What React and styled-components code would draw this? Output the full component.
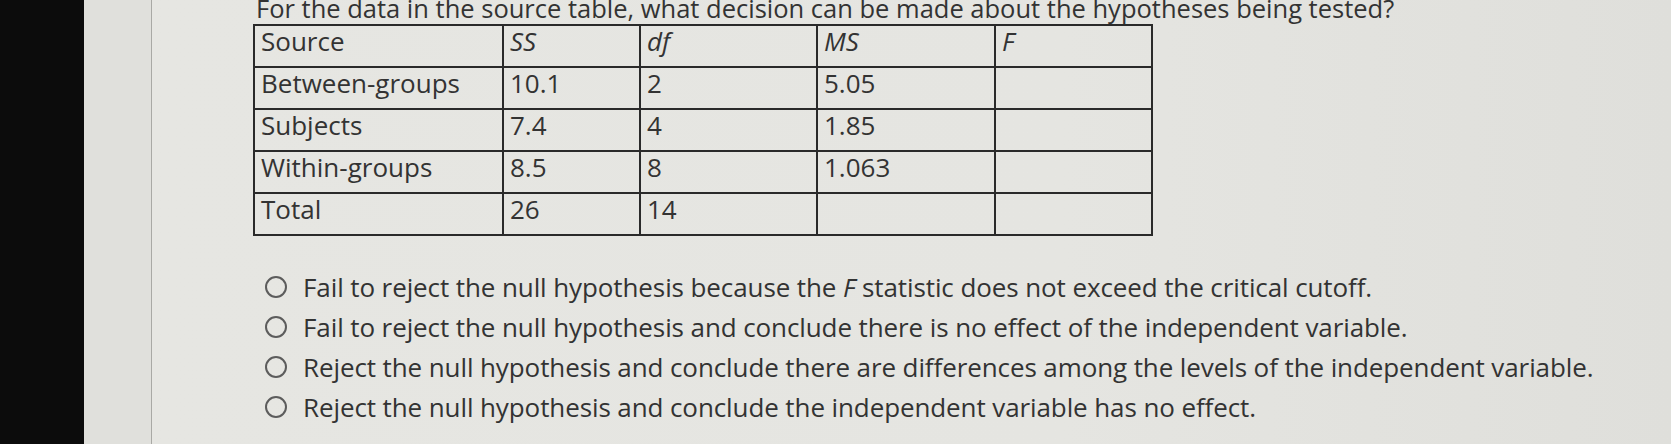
import React from 'react'
import styled, { createGlobalStyle } from 'styled-components'

const Global = createGlobalStyle`
  html, body {
    margin: 0;
    padding: 0;
    background: #e4e4e0;
  }
`

const rows = [
  ['Between-groups', '10.1', '2', '5.05', ''],
  ['Subjects', '7.4', '4', '1.85', ''],
  ['Within-groups', '8.5', '8', '1.063', ''],
  ['Total', '26', '14', '', ''],
]

const widths = [249, 137, 177, 178, 157]

function App() {
  return (
    <Page>
      <Global />
      <Bezel />
      <Gutter />
      <Main>
        <Question>
          For the data in the source table, what decision can be made about the hypotheses being tested?
        </Question>
        <Table>
          <colgroup>
            {widths.map((w, i) => (
              <col key={i} style={{ width: w }} />
            ))}
          </colgroup>
          <tbody>
            <tr>
              <Cell>Source</Cell>
              <Cell italic>SS</Cell>
              <Cell italic>df</Cell>
              <Cell italic>MS</Cell>
              <Cell italic>F</Cell>
            </tr>
            {rows.map((r) => (
              <tr key={r[0]}>
                {r.map((v, i) => (
                  <Cell key={i}>{v}</Cell>
                ))}
              </tr>
            ))}
          </tbody>
        </Table>
        <Options>
          <Option>
            <Radio />
            <span>
              Fail to reject the null hypothesis because the <Em>F</Em> statistic does not exceed the critical cutoff.
            </span>
          </Option>
          <Option>
            <Radio />
            <span>Fail to reject the null hypothesis and conclude there is no effect of the independent variable.</span>
          </Option>
          <Option>
            <Radio />
            <span>Reject the null hypothesis and conclude there are differences among the levels of the independent variable.</span>
          </Option>
          <Option>
            <Radio />
            <span>Reject the null hypothesis and conclude the independent variable has no effect.</span>
          </Option>
        </Options>
      </Main>
    </Page>
  )
}

export default App

const Page = styled.div`
  display: flex;
  width: 1671px;
  height: 444px;
  overflow: hidden;
  font-family: 'Open Sans', 'Noto Sans', sans-serif;
  color: #333333;
`

const Bezel = styled.div`
  width: 84px;
  flex-shrink: 0;
  background: #0c0c0c;
`

const Gutter = styled.div`
  width: 67px;
  flex-shrink: 0;
  background: #e0e0dc;
  border-right: 1px solid #a9a9a5;
`

const Main = styled.div`
  flex: 1;
  display: flex;
  flex-direction: column;
  padding-left: 101px;
  background: linear-gradient(90deg, #e6e6e2 0%, #e5e5e1 60%, #dfdfdb 100%);
`

const Question = styled.div`
  font-size: 25.5px;
  line-height: 28px;
  margin-top: -6px;
  margin-bottom: 2px;
  padding-left: 3px;
  white-space: nowrap;
`

const Table = styled.table`
  border-collapse: collapse;
  table-layout: fixed;
  width: 898px;
  border: 2px solid #2a2a2a;
`

const Cell = styled.td`
  height: 40px;
  padding: 0 6px;
  border: 2px solid #2a2a2a;
  font-size: 26px;
  line-height: 30px;
  vertical-align: top;
  font-style: ${(p) => (p.italic ? 'italic' : 'normal')};
  white-space: nowrap;
`

const Options = styled.div`
  display: flex;
  flex-direction: column;
  gap: 10px;
  margin-top: 36px;
  padding-left: 12px;
`

const Option = styled.div`
  display: flex;
  align-items: center;
  gap: 16px;
  font-size: 26px;
  line-height: 30px;
  letter-spacing: -0.1px;
  white-space: nowrap;
`

const Radio = styled.span`
  width: 18px;
  height: 18px;
  flex-shrink: 0;
  border: 2px solid #5c5c5c;
  border-radius: 50%;
`

const Em = styled.i`
  font-style: italic;
`
